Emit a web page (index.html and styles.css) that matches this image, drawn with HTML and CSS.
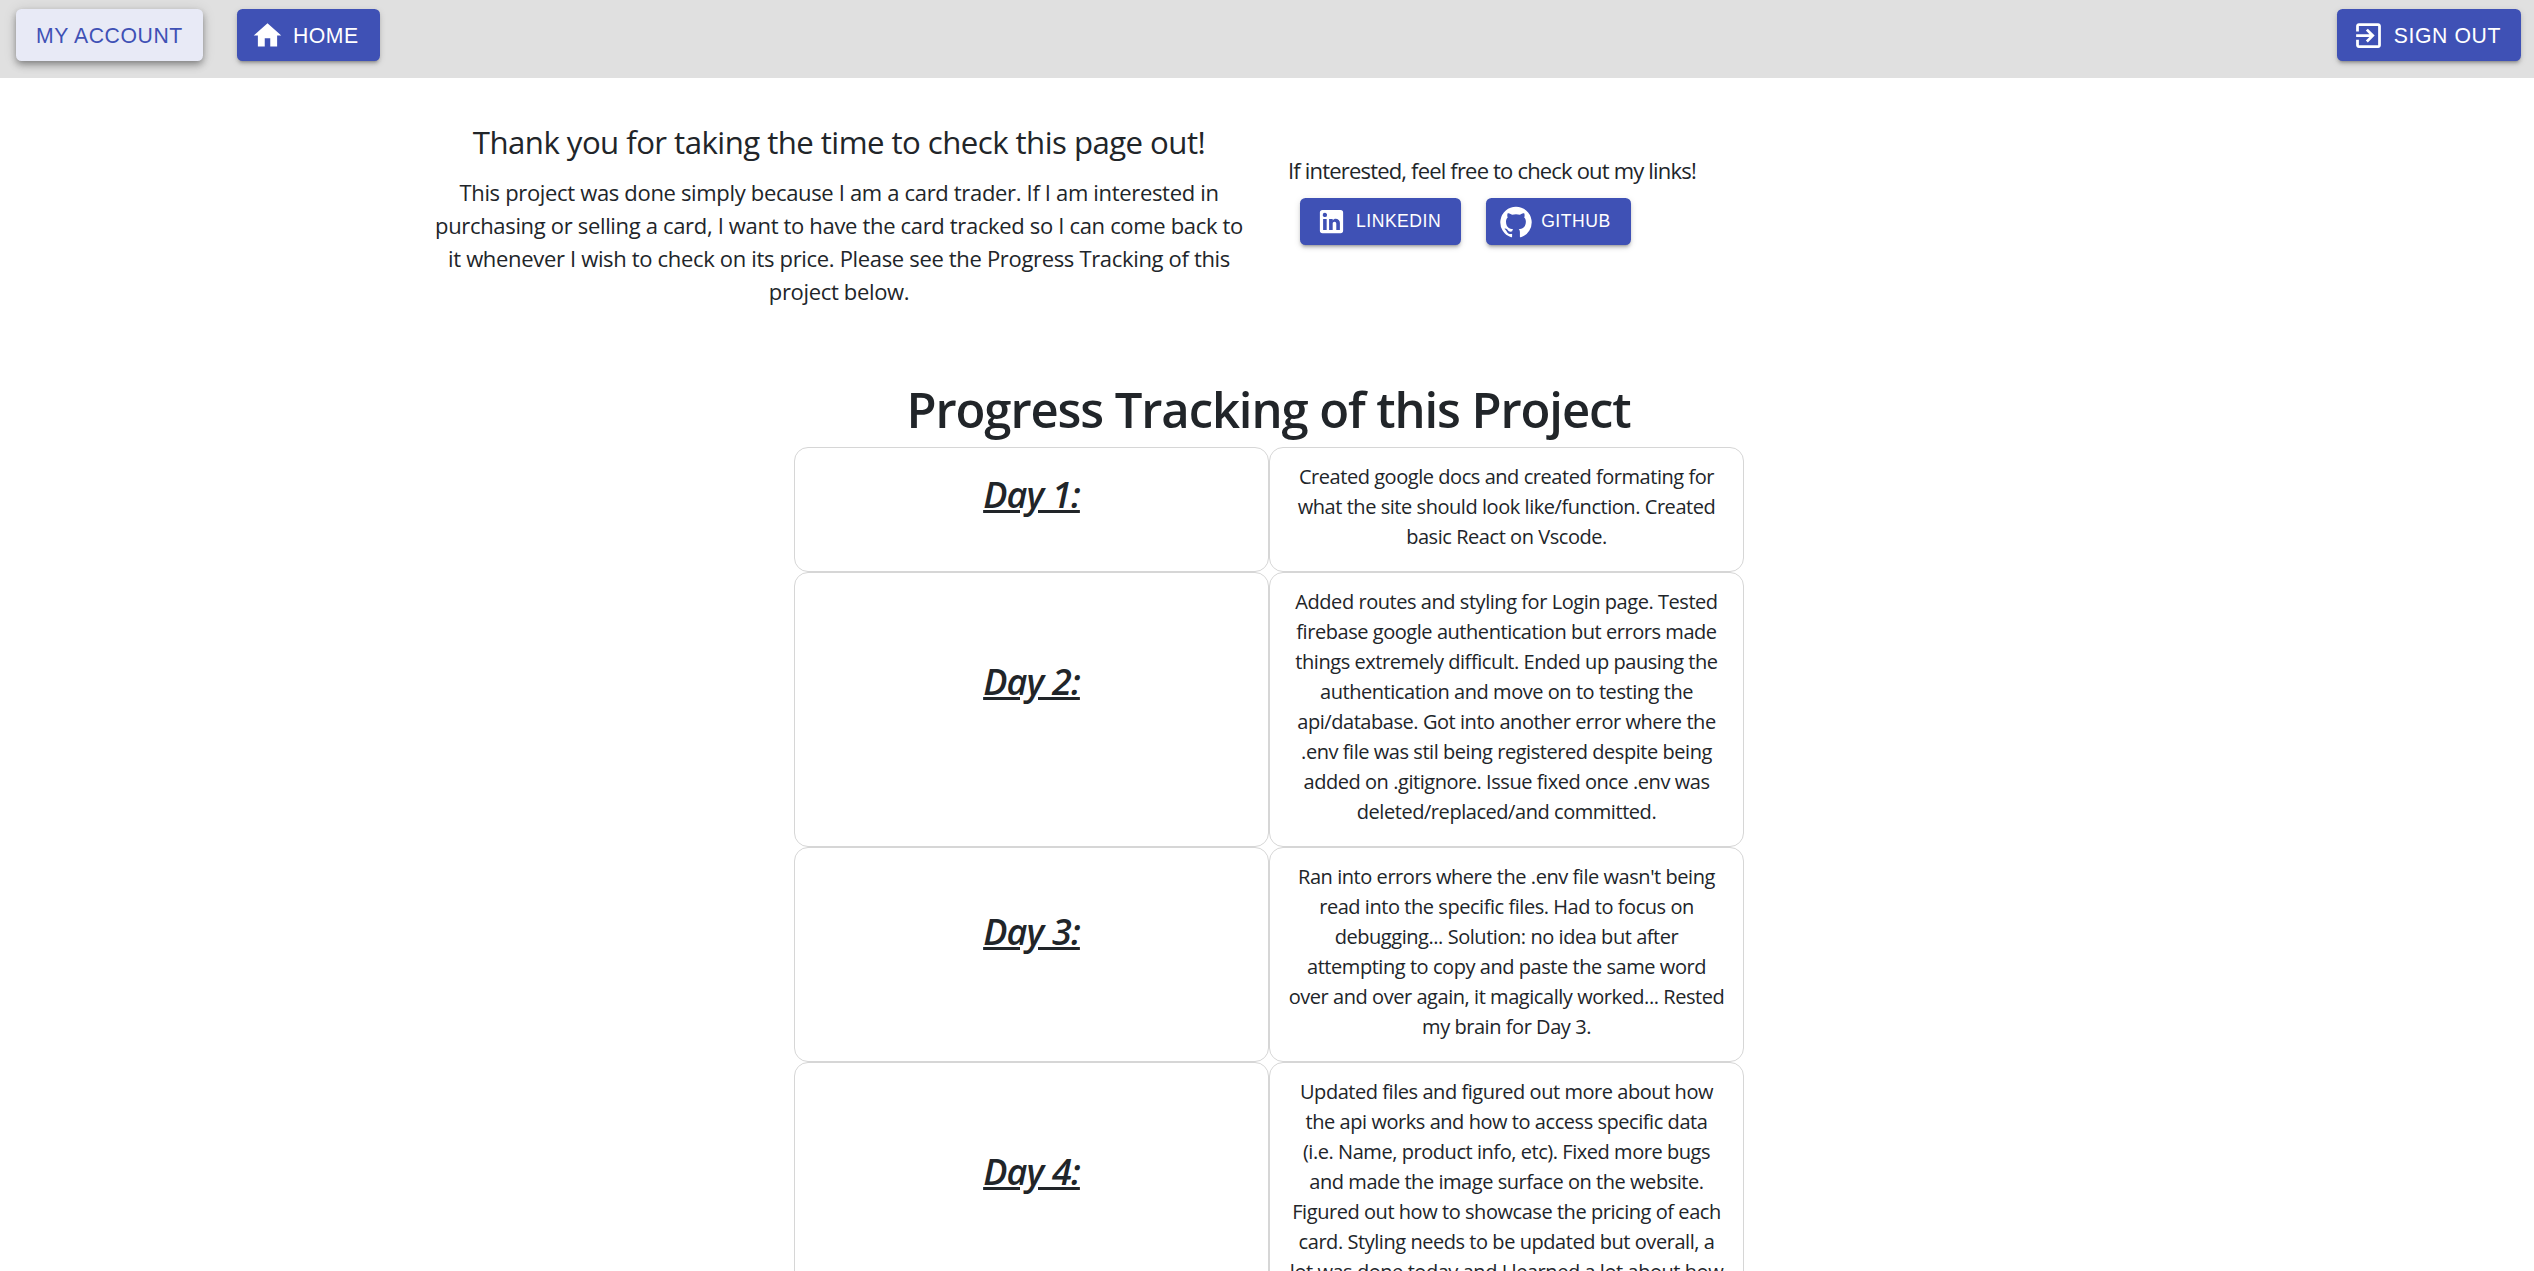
FILE: index.html
```html
<!DOCTYPE html>
<html>
<head>
    <title>About - Card Tracker</title>
    <link rel="stylesheet" href="styles.css">
</head>
<body>
    <nav class="nav">
        <a href="#" class="btn btn-light">My Account</a>
        <a href="#" class="btn home-btn">
            <svg class="icon" viewBox="0 0 24 24"><path d="M10 20v-6h4v6h5v-8h3L12 3 2 12h3v8z"/></svg>
            Home
        </a>
        <a href="#" class="btn signout-btn">
            <svg class="icon" viewBox="0 0 24 24"><path d="M10.09 15.59L11.5 17l5-5-5-5-1.41 1.41L12.67 11H3v2h9.67l-2.58 2.59zM19 3H5c-1.11 0-2 .9-2 2v4h2V5h14v14H5v-4H3v4c0 1.1.89 2 2 2h14c1.1 0 2-.9 2-2V5c0-1.1-.9-2-2-2z"/></svg>
            Sign Out
        </a>
    </nav>

    <div class="intro">
        <div class="intro-text">
            <h3>Thank you for taking the time to check this page out!</h3>
            <p>This project was done simply because I am a card trader. If I am interested in purchasing or selling a card, I want to have the card tracked so I can come back to it whenever I wish to check on its price. Please see the Progress Tracking of this project below.</p>
        </div>
        <div class="links">
            <p>If interested, feel free to check out my links!</p>
            <div class="link-row">
                <a href="#" class="btn btn-small">
                    <svg class="icon-li" viewBox="0 0 24 24"><path d="M19 3a2 2 0 0 1 2 2v14a2 2 0 0 1-2 2H5a2 2 0 0 1-2-2V5a2 2 0 0 1 2-2h14m-.5 15.5v-5.3a3.26 3.26 0 0 0-3.26-3.26c-.85 0-1.84.52-2.32 1.3v-1.11h-2.79v8.37h2.79v-4.93c0-.77.62-1.4 1.39-1.4a1.4 1.4 0 0 1 1.4 1.4v4.93h2.79M6.88 8.56a1.68 1.68 0 0 0 1.68-1.68c0-.93-.75-1.69-1.68-1.69a1.69 1.69 0 0 0-1.69 1.69c0 .93.76 1.68 1.69 1.68m1.39 9.94v-8.37H5.5v8.37h2.77z"/></svg>
                    LinkedIn
                </a>
                <a href="#" class="btn btn-small">
                    <svg class="icon-gh" viewBox="0 0 24 24"><path d="M12 1.27a11 11 0 00-3.48 21.46c.55.09.73-.28.73-.55v-1.84c-3.03.64-3.67-1.46-3.67-1.46-.55-1.29-1.28-1.65-1.28-1.65-.92-.65.1-.65.1-.65 1.1 0 1.73 1.1 1.73 1.1.92 1.65 2.57 1.2 3.21.92a2 2 0 01.64-1.47c-2.47-.27-5.04-1.19-5.04-5.5 0-1.1.46-2.1 1.2-2.84a3.76 3.76 0 010-2.93s.91-.28 3.11 1.1c1.8-.49 3.7-.49 5.5 0 2.1-1.38 3.02-1.1 3.02-1.1a3.76 3.76 0 010 2.93c.83.74 1.2 1.74 1.2 2.94 0 4.21-2.57 5.13-5.04 5.4.45.37.82.92.82 2.02v3.03c0 .27.1.64.73.55A11 11 0 0012 1.27"/></svg>
                    GitHub
                </a>
            </div>
        </div>
    </div>

    <h1 class="title">Progress Tracking of this Project</h1>

    <div class="progress">
        <div class="cell day"><span>Day 1:</span></div>
        <div class="cell">Created google docs and created formating for<br>what the site should look like/function. Created<br>basic React on Vscode.</div>

        <div class="cell day"><span>Day 2:</span></div>
        <div class="cell">Added routes and styling for Login page. Tested<br>firebase google authentication but errors made<br>things extremely difficult. Ended up pausing the<br>authentication and move on to testing the<br>api/database. Got into another error where the<br>.env file was stil being registered despite being<br>added on .gitignore. Issue fixed once .env was<br>deleted/replaced/and committed.</div>

        <div class="cell day"><span>Day 3:</span></div>
        <div class="cell">Ran into errors where the .env file wasn't being<br>read into the specific files. Had to focus on<br>debugging... Solution: no idea but after<br>attempting to copy and paste the same word<br>over and over again, it magically worked... Rested<br>my brain for Day 3.</div>

        <div class="cell day last-row"><span>Day 4:</span></div>
        <div class="cell last-row">Updated files and figured out more about how<br>the api works and how to access specific data<br>(i.e. Name, product info, etc). Fixed more bugs<br>and made the image surface on the website.<br>Figured out how to showcase the pricing of each<br>card. Styling needs to be updated but overall, a<br>lot was done today and I learned a lot about how</div>
    </div>
</body>
</html>
```

FILE: styles.css
```css
html { overflow: hidden; }
body { margin: 0; background: #fff; color: #212529; font-family: "Open Sans", "Noto Sans", sans-serif; font-size: 22px; line-height: 33px; letter-spacing: -0.33px; }
a { text-decoration: none; }

.nav { display: flex; align-items: flex-start; height: 78px; box-sizing: border-box; padding: 9px 13px 0 16px; background: #e0e0e0; }
.btn { display: inline-flex; align-items: center; height: 52px; box-sizing: border-box; padding: 0 21px; border-radius: 5.5px; background: #3f51b5; color: #fff; font-family: "Liberation Sans", Arial, sans-serif; font-size: 21.2px; letter-spacing: 0.6px; text-transform: uppercase; box-shadow: 0 4px 2px -3px rgba(0,0,0,.2), 0 3px 3px 0 rgba(0,0,0,.14), 0 2px 7px 0 rgba(0,0,0,.12); }
.btn-light { background: #e8eaf6; color: #3f51b5; padding: 0 20px; box-shadow: 0 3px 6px -1px rgba(0,0,0,.3), 0 5px 8px 0 rgba(0,0,0,.14), 0 1px 14px 0 rgba(0,0,0,.12); }
.home-btn { margin-left: 34px; padding-left: 14px; }
.signout-btn { margin-left: auto; padding: 0 20px 0 15px; }
.icon { width: 33px; height: 33px; margin-right: 9px; fill: currentColor; }

.intro { display: flex; margin-left: 429px; padding-top: 43px; }
.intro-text { width: 820px; text-align: center; }
.intro-text h3 { margin: 0 0 13px; font-size: 31.2px; font-weight: 400; line-height: 42px; letter-spacing: -0.55px; }
.intro-text p { margin: 0; }
.links { margin: 33px 0 0 39px; letter-spacing: -0.82px; }
.links p { margin: 0 0 11px; }
.link-row { display: flex; gap: 25px; margin-left: 12px; }
.btn-small { height: 47px; padding: 0 20px 0 16px; font-size: 17.6px; letter-spacing: 0.5px; }
.icon-li { width: 31px; height: 31px; margin-right: 9px; fill: currentColor; }
.icon-gh { width: 34px; height: 34px; margin-right: 8px; margin-left: -3px; fill: currentColor; }

.title { margin: 68px 0 0; padding-left: 3px; font-size: 49px; font-weight: 600; line-height: 66px; text-align: center; letter-spacing: -1.1px; }

.progress { display: grid; grid-template-columns: 475px 475px; width: 950px; margin: 5px 0 0 794px; font-size: 20px; line-height: 30px; letter-spacing: -0.45px; white-space: nowrap; }
.cell { box-sizing: border-box; padding: 13.5px 10px 19.5px; border: 1.5px solid #d6d6d6; border-radius: 14px; text-align: center; }
.last-row { min-height: 275px; }
.day { display: flex; flex-direction: column; align-items: center; }
.day::before { content: ""; flex: 41; }
.day::after { content: ""; flex: 59; }
.day span { margin-top: -12px; font-size: 36px; font-weight: 600; font-style: italic; line-height: 46px; text-decoration: underline; letter-spacing: -0.8px; }
```
